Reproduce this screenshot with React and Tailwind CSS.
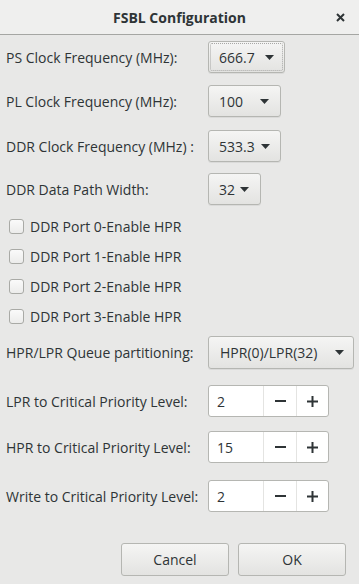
import React from "react";

const font = { fontFamily: '"Open Sans", "Noto Sans", sans-serif' };

function Arrow() {
  return (
    <svg width="9" height="5" viewBox="0 0 9 5" className="shrink-0">
      <path d="M0 0 L9 0 L4.5 5 Z" fill="#2e3436" />
    </svg>
  );
}

function Drop({ value, w, h = "h-[32px]", focus, gapCls = "gap-[10px]", pl = "pl-[10px]" }) {
  return (
    <div
      className={`relative flex items-center ${h} ${w} ${pl} ${gapCls} rounded-[3px] border border-[#b5b6b2] bg-gradient-to-b from-[#f5f5f4] to-[#e3e3e1] shadow-[0_1px_0_rgba(0,0,0,0.06)]`}
    >
      <span className="text-[14px] text-[#2e3436]">{value}</span>
      <Arrow />
      {focus && (
        <div className="absolute inset-[1px] border border-dotted border-[#a8a8a6] rounded-[2px] pointer-events-none" />
      )}
    </div>
  );
}

function Spin({ value }) {
  return (
    <div className="flex h-[32px] w-[121px] rounded-[3px] border border-[#b5b6b2] bg-white overflow-hidden">
      <div className="flex items-center w-[54px] pl-[8px] text-[14px] text-[#2e3436]">{value}</div>
      <div className="flex items-center justify-center w-[33px] border-l border-[#e4e4e2]">
        <svg width="11" height="2" viewBox="0 0 11 2"><rect width="11" height="2" fill="#2e3436" /></svg>
      </div>
      <div className="flex items-center justify-center flex-1 border-l border-[#e4e4e2]">
        <svg width="11" height="11" viewBox="0 0 11 11">
          <rect y="4.5" width="11" height="2" fill="#2e3436" />
          <rect x="4.5" width="2" height="11" fill="#2e3436" />
        </svg>
      </div>
    </div>
  );
}

function Row({ label, mt, children }) {
  return (
    <div className={`flex items-center ${mt}`}>
      <div className="w-[208px] pl-[6px] text-[14px] text-[#2e3436] whitespace-nowrap">{label}</div>
      {children}
    </div>
  );
}

function Check({ label }) {
  return (
    <div className="flex items-center h-[30px] pl-[9px] gap-[6px]">
      <div className="w-[15px] h-[15px] rounded-[3px] border border-[#a9aaa6] bg-gradient-to-b from-[#fafafa] to-[#ececeb]" />
      <span className="text-[14px] text-[#2e3436]">{label}</span>
    </div>
  );
}

export default function App() {
  return (
    <div className="w-[359px] h-[584px] bg-[#e8e8e7] flex flex-col overflow-hidden" style={font}>
      <div className="relative h-[35px] shrink-0 bg-[#efefee] border-b border-[#a5a6a3] flex items-center justify-center">
        <span className="text-[14px] font-bold text-[#2e3436]">FSBL Configuration</span>
        <svg className="absolute left-[336px] top-[13px]" width="9" height="9" viewBox="0 0 9 9">
          <path d="M1 1 L8 8 M8 1 L1 8" stroke="#2e3436" strokeWidth="2" />
        </svg>
      </div>

      <Row label="PS Clock Frequency (MHz):" mt="mt-[6px]">
        <Drop value="666.7" w="w-[77px]" focus />
      </Row>
      <Row label="PL Clock Frequency (MHz):" mt="mt-[12px]">
        <Drop value="100" w="w-[73px]" gapCls="gap-[17px]" />
      </Row>
      <Row label="DDR Clock Frequency (MHz) :" mt="mt-[13px]">
        <Drop value="533.3" w="w-[73px]" gapCls="gap-[6px]" />
      </Row>
      <Row label="DDR Data Path Width:" mt="mt-[11px]">
        <Drop value="32" w="w-[53px]" gapCls="gap-[5px]" />
      </Row>

      <div className="mt-[6px] flex flex-col">
        <Check label="DDR Port 0-Enable HPR" />
        <Check label="DDR Port 1-Enable HPR" />
        <Check label="DDR Port 2-Enable HPR" />
        <Check label="DDR Port 3-Enable HPR" />
      </div>

      <Row label="HPR/LPR Queue partitioning:" mt="mt-[5px]">
        <Drop value="HPR(0)/LPR(32)" w="w-[146px]" h="h-[33px]" gapCls="gap-[18px]" pl="pl-[11px]" />
      </Row>
      <Row label="LPR to Critical Priority Level:" mt="mt-[16px]">
        <Spin value="2" />
      </Row>
      <Row label="HPR to Critical Priority Level:" mt="mt-[14px]">
        <Spin value="15" />
      </Row>
      <Row label="Write to Critical Priority Level:" mt="mt-[17px]">
        <Spin value="2" />
      </Row>

      <div className="mt-[31px] flex justify-end gap-[9px] pr-[13px]">
        <div className="w-[108px] h-[33px] flex items-center justify-center rounded-[3px] border border-[#b5b6b2] bg-gradient-to-b from-[#f5f5f4] to-[#e3e3e1] text-[14px] text-[#2e3436]">
          Cancel
        </div>
        <div className="w-[108px] h-[33px] flex items-center justify-center rounded-[3px] border border-[#b5b6b2] bg-gradient-to-b from-[#f5f5f4] to-[#e3e3e1] text-[14px] text-[#2e3436]">
          OK
        </div>
      </div>
    </div>
  );
}
